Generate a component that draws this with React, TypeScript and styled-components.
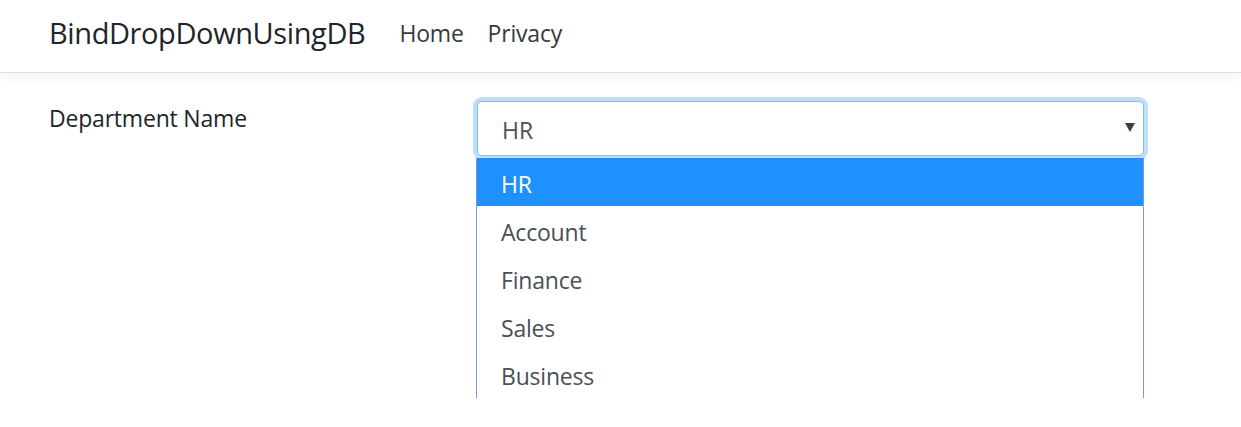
import styled, { createGlobalStyle } from 'styled-components';

const GlobalStyle = createGlobalStyle`
    body {
        margin: 0;
        background: #fff;
        font-family: "Open Sans", "Noto Sans", sans-serif;
        color: #212529;
    }
`;

const Navbar = styled.nav`
    height: 73px;
    box-sizing: border-box;
    display: flex;
    align-items: center;
    padding: 0 0 7px 49px;
    border-bottom: 1px solid #dadde2;
    box-shadow: 0 4px 14px rgba(0, 0, 0, 0.05);
    background: #fff;
`;

const Brand = styled.a`
    font-size: 29px;
    line-height: 40px;
    color: #212529;
    margin-right: 22px;
    letter-spacing: -0.4px;
`;

const NavLink = styled.a`
    font-size: 23px;
    line-height: 40px;
    color: #343a40;
    padding: 0 12px;
    letter-spacing: -0.2px;
`;

const Main = styled.main`
    padding: 28px 0 0 49px;
`;

const FormRow = styled.div`
    display: grid;
    grid-template-columns: 427px 668px;
    align-items: start;
`;

const Label = styled.label`
    font-size: 23px;
    line-height: 30px;
    padding-top: 2px;
    letter-spacing: -0.2px;
`;

const SelectWrap = styled.div`
    display: flex;
    flex-direction: column;
`;

const SelectBox = styled.div`
    height: 55px;
    margin-left: 1px;
    box-sizing: border-box;
    display: flex;
    align-items: center;
    justify-content: space-between;
    padding: 3px 8px 0 24px;
    border: 1px solid #80bdff;
    border-radius: 5px;
    box-shadow: 0 0 0 4px rgba(0, 123, 255, 0.25);
    font-size: 23px;
    color: #495057;
    background: #fff;
`;

const Caret = styled.span`
    width: 0;
    height: 0;
    border-left: 5px solid transparent;
    border-right: 5px solid transparent;
    border-top: 9px solid #3a3f44;
    margin-top: -6px;
`;

const OptionList = styled.ul`
    margin: 2px 0 0;
    padding: 0;
    list-style: none;
    background: #fff;
    border-left: 1px solid #7a9cd8;
    border-right: 1px solid #7a9cd8;
`;

const Option = styled.li<{ $selected?: boolean }>`
    height: 48px;
    box-sizing: border-box;
    display: flex;
    align-items: center;
    padding: 4px 0 0 24px;
    font-size: 23px;
    letter-spacing: -0.2px;
    color: ${p => (p.$selected ? '#fff' : '#495057')};
    background: ${p => (p.$selected ? '#1e90ff' : '#fff')};
`;

const departments = ['HR', 'Account', 'Finance', 'Sales', 'Business'];

export default function App() {
    return (
        <>
            <GlobalStyle />
            <Navbar>
                <Brand>BindDropDownUsingDB</Brand>
                <NavLink>Home</NavLink>
                <NavLink>Privacy</NavLink>
            </Navbar>
            <Main>
                <FormRow>
                    <Label>Department Name</Label>
                    <SelectWrap>
                        <SelectBox>
                            HR
                            <Caret />
                        </SelectBox>
                        <OptionList>
                            {departments.map((d, i) => (
                                <Option key={d} $selected={i === 0}>{d}</Option>
                            ))}
                        </OptionList>
                    </SelectWrap>
                </FormRow>
            </Main>
        </>
    );
}
